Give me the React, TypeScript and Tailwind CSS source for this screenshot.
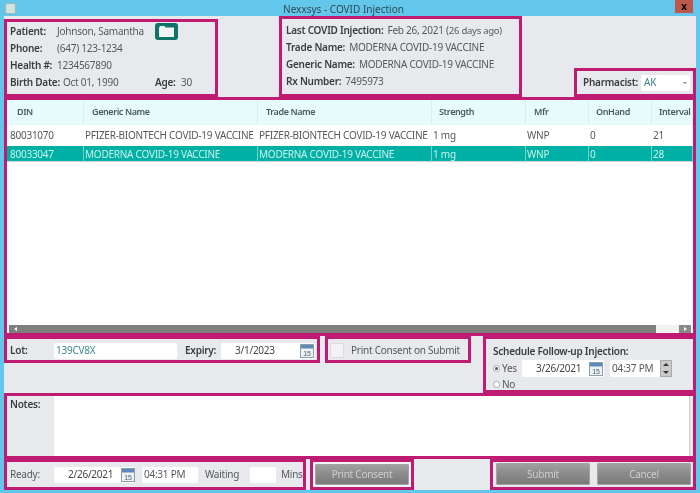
import React from "react";

function Cal({ className = "" }: { className?: string }) {
  return (
    <svg width="14" height="14" viewBox="0 0 14 14" className={"shrink-0 " + className}>
      <rect x="0.5" y="0.5" width="13" height="13" fill="#eef2f5" stroke="#8fa0ad" />
      <rect x="1" y="1" width="12" height="3.5" fill="#5b89b8" />
      <text x="7" y="11.5" textAnchor="middle" fontSize="7" fill="#4a6070" fontFamily="Liberation Sans, sans-serif">15</text>
    </svg>
  );
}

function Folder() {
  return (
    <div className="w-[23px] h-[17px] rounded-[3px] bg-[#0f7467] flex items-center justify-center shrink-0">
      <svg width="17" height="13" viewBox="0 0 17 13">
        <path d="M1 3 L1 12 L16 12 L16 2.5 L7.5 2.5 L6.5 1 L2 1 Z" fill="#f2f4f3" />
      </svg>
    </div>
  );
}

const B = ({ children, className = "" }: { children: React.ReactNode; className?: string }) => (
  <span className={"font-semibold text-[#3a3d40] " + className}>{children}</span>
);

const cols = "grid grid-cols-[77px_174px_174px_94px_63px_63px_41px]";
const headers = [
  ["DIN", "pl-[10px]"],
  ["Generic Name", "pl-[8px]"],
  ["Trade Name", "pl-[8px]"],
  ["Strength", "pl-[7px]"],
  ["Mfr", "pl-[8px]"],
  ["OnHand", "pl-[7px]"],
  ["Interval", "pl-[7px]"],
];
const row1 = ["80031070", "PFIZER-BIONTECH COVID-19 VACCINE", "PFIZER-BIONTECH COVID-19 VACCINE", "1 mg", "WNP", "0", "21"];
const row2 = ["80033047", "MODERNA COVID-19 VACCINE", "MODERNA COVID-19 VACCINE", "1 mg", "WNP", "0", "28"];

const btn =
  "rounded-[1px] border border-[#a3a3a3] bg-gradient-to-b from-[#a0a0a0] via-[#8a8a8a] to-[#7a7a7a] text-[#cfcfcf] flex items-center justify-center";

export default function App() {
  return (
    <div
      className="w-[700px] h-[493px] overflow-hidden bg-[#62c7ea] flex flex-col text-[10px] tracking-[-0.25px] text-[#55595c] blur-[0.4px]"
      style={{ fontFamily: '"Noto Sans", sans-serif' }}
    >
      {/* title bar */}
      <div className="h-[16px] flex items-start shrink-0">
        <div className="ml-[5px] mt-[3px] w-[11px] h-[11px] rounded-[2px] bg-[#cfe3df] border border-[#9fb8b4]" />
        <div className="flex-1 text-center text-[#2d4a57] leading-[16px] pt-[1px] pr-[4px] tracking-normal">Nexxsys - COVID Injection</div>
        <div className="w-[18px] h-[13px] mr-[7px] bg-[#c0574d] text-black font-bold text-[10px] leading-[13px] text-center">x</div>
      </div>

      {/* body */}
      <div className="mx-[4px] w-[692px] h-[474px] bg-[#e8e9ec] flex flex-col">
        {/* top row */}
        <div className="h-[81px] flex shrink-0">
          <div className="mt-[3px] w-[214px] border-[3px] border-[#be1c72] pl-[3px] pb-[2px] flex flex-col justify-center leading-[17px]">
            <div className="flex h-[17px] items-center">
              <B className="w-[47px]">Patient:</B>
              <span className="w-[98px]">Johnson, Samantha</span>
              <Folder />
            </div>
            <div className="flex h-[17px] items-center">
              <B className="w-[47px]">Phone:</B>
              <span>(647) 123-1234</span>
            </div>
            <div className="flex h-[17px] items-center">
              <B className="w-[47px]">Health #:</B>
              <span>1234567890</span>
            </div>
            <div className="flex h-[17px] items-center">
              <B className="w-[53px]">Birth Date:</B>
              <span className="w-[92px]">Oct 01, 1990</span>
              <B className="w-[26px]">Age:</B>
              <span>30</span>
            </div>
          </div>
          <div className="ml-[61px] w-[243px] border-[3px] border-[#be1c72] pl-[4px] pb-[1px] flex flex-col justify-center">
            <div className="flex h-[17px] items-center gap-[4px]">
              <B>Last COVID Injection:</B>
              <span>Feb 26, 2021 (<span className="text-[9.5px]">26 days ago)</span></span>
            </div>
            <div className="flex h-[17px] items-center gap-[4px]">
              <B>Trade Name:</B>
              <span>MODERNA COVID-19 VACCINE</span>
            </div>
            <div className="flex h-[17px] items-center gap-[4px]">
              <B>Generic Name:</B>
              <span>MODERNA COVID-19 VACCINE</span>
            </div>
            <div className="flex h-[17px] items-center gap-[4px]">
              <B>Rx Number:</B>
              <span>7495973</span>
            </div>
          </div>
          <div className="ml-[52px] mt-[52px] w-[122px] border-[3px] border-[#be1c72] flex items-center pl-[6px]">
            <B className="w-[58px]">Pharmacist:</B>
            <div className="w-[49px] h-[16px] bg-white rounded-[2px] flex items-center justify-between pl-[3px] pr-[3px] text-[#3f7f86]">
              <span>AK</span>
              <span className="w-0 h-0 border-x-[2px] border-x-transparent border-t-[2px] border-t-[#888]" />
            </div>
          </div>
        </div>

        {/* grid */}
        <div className="h-[239px] border-[3px] border-[#be1c72] bg-white flex flex-col shrink-0">
          <div className={cols + " h-[25px] bg-[#e6fbfb] text-[#4a5a5f] font-semibold text-[9px] tracking-[-0.4px] items-stretch shrink-0"}>
            {headers.map(([h, p]) => (
              <div key={h} className={"flex items-center pb-[2px] border-r border-[#d6eeee] whitespace-nowrap " + p}>{h}</div>
            ))}
          </div>
          <div className={cols + " h-[21px] items-center shrink-0 pb-[1px]"}>
            {row1.map((t, i) => (
              <div key={i} className={(i === 0 ? "pl-[3px]" : "pl-[1px]") + " whitespace-nowrap"}>{t}</div>
            ))}
          </div>
          <div className={cols + " h-[15px] bg-[#00b0a5] text-[#c8f2ec] items-stretch shrink-0 shadow-[0_1px_0_#d5d5d5]"}>
            {row2.map((t, i) => (
              <div key={i} className={(i === 0 ? "pl-[3px]" : "pl-[1px]") + " pt-[1px] flex items-center border-r border-[#6fd3cc] whitespace-nowrap"}>{t}</div>
            ))}
          </div>
          <div className="flex-1" />
          <div className="h-[8px] flex items-stretch shrink-0 pl-[2px] pr-[2px]">
            <div className="w-[647px] bg-[#7f7f7f] flex items-center pl-[5px]">
              <span className="w-0 h-0 border-y-[2px] border-y-transparent border-r-[3px] border-r-white" />
            </div>
            <div className="w-[23px] bg-[#f2f2f2]" />
            <div className="w-[12px] bg-[#8a8a8a] flex items-center justify-center">
              <span className="w-0 h-0 border-y-[2px] border-y-transparent border-l-[3px] border-l-white" />
            </div>
          </div>
        </div>

        {/* middle row */}
        <div className="h-[57px] flex shrink-0">
          <div className="w-[316px] h-[27px] border-[3px] border-[#be1c72] flex items-center pl-[3px] pt-[2px]">
            <B className="w-[44px]">Lot:</B>
            <div className="w-[123px] h-[16px] bg-white rounded-[2px] pl-[2px] text-[#3d8a8a] flex items-center">139CV8X</div>
            <B className="ml-[8px] w-[36px]">Expiry:</B>
            <div className="w-[94px] h-[16px] bg-white rounded-[2px] flex items-center justify-between pl-[14px] pr-[1px] text-[#444]">
              <span>3/1/2023</span>
              <Cal />
            </div>
          </div>
          <div className="ml-[5px] w-[146px] h-[27px] border-[3px] border-[#be1c72] flex items-center pl-[2px] pt-[2px]">
            <div className="w-[14px] h-[15px] bg-[#f3f3f5] border border-[#dcdce0]" />
            <span className="ml-[7px]">Print Consent on Submit</span>
          </div>
          <div className="ml-[12px] w-[213px] h-[57px] border-[3px] border-[#be1c72] pl-[7px] flex flex-col">
            <B className="h-[18px] leading-[18px] pt-[3px] block">Schedule Follow-up Injection:</B>
            <div className="flex items-center h-[17px] mt-[3px]">
              <span className="w-[7px] h-[7px] rounded-full border border-[#aaa] bg-white flex items-center justify-center">
                <span className="w-[3px] h-[3px] rounded-full bg-[#555]" />
              </span>
              <span className="ml-[2px] w-[20px]">Yes</span>
              <div className="w-[82px] h-[17px] bg-white rounded-[2px] flex items-center justify-between pl-[14px] pr-[1px] text-[#444]">
                <span>3/26/2021</span>
                <Cal />
              </div>
              <div className="ml-[6px] w-[50px] h-[17px] bg-white rounded-[2px] pl-[2px] flex items-center">04:37 PM</div>
              <div className="w-[12px] h-[17px] bg-[#c9cacc] border border-[#aaa] flex flex-col items-center justify-around">
                <span className="w-0 h-0 border-x-[3px] border-x-transparent border-b-[3px] border-b-[#333]" />
                <span className="w-0 h-0 border-x-[3px] border-x-transparent border-t-[3px] border-t-[#333]" />
              </div>
            </div>
            <div className="flex items-center h-[14px]">
              <span className="w-[7px] h-[7px] rounded-full border border-[#aaa] bg-white" />
              <span className="ml-[2px]">No</span>
            </div>
          </div>
        </div>

        {/* notes */}
        <div className="h-[66px] border-[3px] border-[#be1c72] flex shrink-0">
          <B className="w-[47px] pl-[3px] pt-[1px] block">Notes:</B>
          <div className="flex-1 bg-white mr-[3px] border-r border-[#d0d0d0]" />
        </div>

        {/* bottom row */}
        <div className="h-[31px] flex shrink-0">
          <div className="w-[302px] border-[3px] border-[#be1c72] flex items-center pl-[3px]">
            <span className="w-[44px]">Ready:</span>
            <div className="w-[81px] h-[16px] bg-white rounded-[2px] flex items-center justify-between pl-[14px] text-[#444]">
              <span>2/26/2021</span>
              <Cal />
            </div>
            <div className="ml-[7px] w-[56px] h-[16px] bg-white rounded-[2px] pl-[2px] flex items-center">04:31 PM</div>
            <span className="ml-[7px] w-[45px]">Waiting</span>
            <div className="w-[26px] h-[16px] bg-white rounded-[2px]" />
            <span className="ml-[5px]">Mins</span>
          </div>
          <div className="ml-[4px] w-[104px] border-[3px] border-[#be1c72] bg-[#f4f4f5] p-[2px] flex">
            <div className={btn + " flex-1"}>Print Consent</div>
          </div>
          <div className="ml-[76px] w-[206px] border-[3px] border-[#be1c72] pl-[3px] pr-[2px] pt-[1px] pb-[2px] flex gap-[7px]">
            <div className={btn + " w-[94px]"}>Submit</div>
            <div className={btn + " w-[94px]"}>Cancel</div>
          </div>
        </div>
      </div>
    </div>
  );
}
